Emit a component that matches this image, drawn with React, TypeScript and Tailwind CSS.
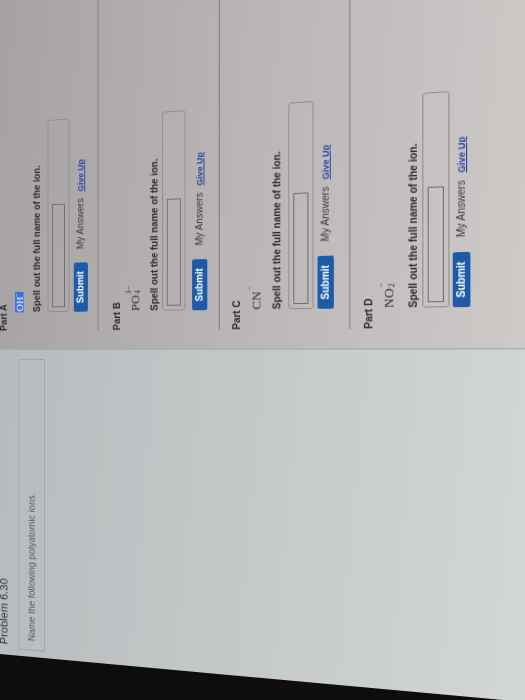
import React from "react";

function Formula({ base, sub, sup }: { base: string; sub?: string; sup?: string }) {
  return (
    <span className="inline-flex items-start font-['Liberation_Serif','Times_New_Roman',serif] text-[13px] leading-[16px] text-[#303030]">
      <span>{base}</span>
      <span className="inline-flex flex-col justify-between h-[18px] -mt-[3px] ml-[1px] text-[8px] leading-[8px]">
        <span>{sup ?? ""}</span>
        <span>{sub ?? ""}</span>
      </span>
    </span>
  );
}

function SelectedOH() {
  return (
    <span className="inline-flex items-start h-[10px] mt-[3px] px-[1px] bg-[#3a74d6] font-['Liberation_Serif','Times_New_Roman',serif] text-[11px] leading-[11px] text-white">
      OH
      <span className="text-[7px] leading-[7px] -mt-[1px]">−</span>
    </span>
  );
}

type PartProps = {
  label: string;
  formula: React.ReactNode;
  pt: string;
  formulaMt: string;
  spellMt: string;
  boxMt: string;
  submitMt: string;
};

function Part({ label, formula, pt, formulaMt, spellMt, boxMt, submitMt }: PartProps) {
  return (
    <section className={"h-[131px] border-t border-[#7d7b7c] " + pt}>
      <div className="text-[10px] leading-[12px] font-bold text-[#2a2a2a]">{label}</div>
      <div className={"pl-[20px] h-[16px] flex items-start " + formulaMt}>{formula}</div>
      <div className={"pl-[20px] text-[10px] leading-[12px] font-bold text-[#2c2c2c] " + spellMt}>
        Spell out the full name of the ion.
      </div>
      <div className={"ml-[20px] w-[205px] h-[25px] border border-[#8f8d8d] rounded-[3px] flex items-center pl-[4px] " + boxMt}>
        <div className="w-[110px] h-[15px] border border-[#6f6d6e]" />
      </div>
      <div className={"ml-[20px] flex items-center h-[16px] " + submitMt}>
        <span className="h-[16px] w-[52px] rounded-[2px] bg-[#1d5aa8] text-white text-[10px] leading-[12px] font-bold flex items-center justify-center">
          Submit
        </span>
        <span className="ml-[14px] text-[10px] leading-[12px] text-[#383838]">My Answers</span>
        <span className="ml-[7px] text-[9px] leading-[12px] font-bold text-[#2945a3] underline">Give Up</span>
      </div>
    </section>
  );
}

export default function App() {
  return (
    <div className="relative w-[525px] h-[700px] overflow-hidden bg-[linear-gradient(95deg,#a6a2a4_0%,#bab6b6_45%,#d0ccca_100%)] font-['Liberation_Sans',Arial,sans-serif]">
      <div className="absolute left-[-87.5px] top-[87.5px] w-[700px] h-[525px] flex [transform:rotate(-90deg)_perspective(600px)_rotateX(10deg)]">
        <aside className="self-start shrink-0 mt-[-60px] ml-[-40px] w-[392px] h-[660px] border-r border-[#9aa7aa] bg-[#d6eef3]/30 pt-[31px]">
          <div className="pl-[72px] text-[12px] leading-[14px] text-[#353535]">Problem 6.30</div>
          <div className="ml-[68px] mt-[10px] w-[313px] h-[31px] border border-[#9ea3a3] flex items-center pl-[9px] text-[10px] leading-[12px] text-[#575757]">
            Name the following polyatomic ions.
          </div>
        </aside>
        <main className="shrink-0 w-[410px] pl-[19px]">
          <div className="mt-[-45px]">
            <Part
              label="Part A"
              formula={<SelectedOH />}
              pt="pt-[16px]"
              formulaMt="mt-[4px]"
              spellMt="mt-[7px]"
              boxMt="mt-[6px]"
              submitMt="mt-[5px]"
            />
            <Part
              label="Part B"
              formula={<Formula base="PO" sub="4" sup="3−" />}
              pt="pt-[15px]"
              formulaMt="mt-[6px]"
              spellMt="mt-[7px]"
              boxMt="mt-[2px]"
              submitMt="mt-[7px]"
            />
            <Part
              label="Part C"
              formula={<Formula base="CN" sup="−" />}
              pt="pt-[12px]"
              formulaMt="mt-[6px]"
              spellMt="mt-[7px]"
              boxMt="mt-[5px]"
              submitMt="mt-[4px]"
            />
            <Part
              label="Part D"
              formula={<Formula base="NO" sub="2" sup="−" />}
              pt="pt-[12px]"
              formulaMt="mt-[5px]"
              spellMt="mt-[9px]"
              boxMt="mt-[2px]"
              submitMt="mt-[3px]"
            />
          </div>
        </main>
      </div>
      <svg className="absolute inset-0 pointer-events-none" width="525" height="700">
        <polygon points="0,654 525,702 0,702" fill="#0e0c0d" />
      </svg>
    </div>
  );
}
